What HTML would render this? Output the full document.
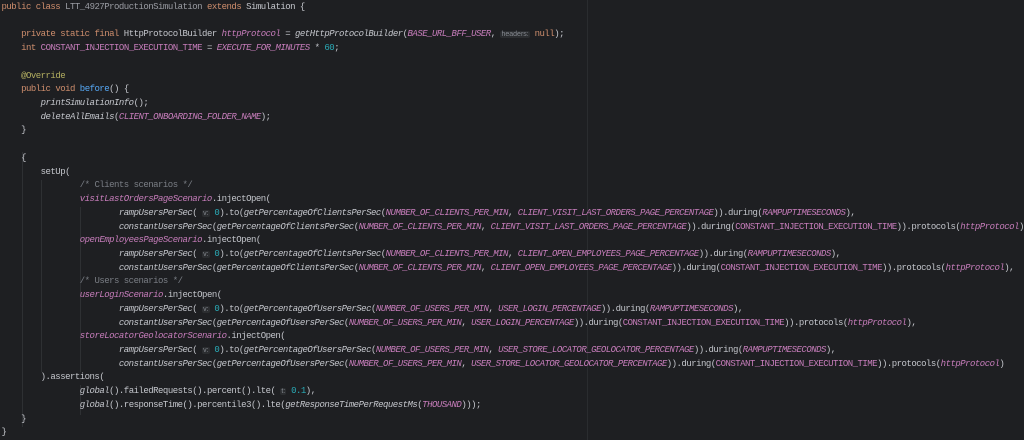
<!DOCTYPE html>
<html><head><meta charset="utf-8"><style>
html,body{margin:0;padding:0;background:#1e1f22;width:1024px;height:440px;overflow:hidden}
pre{margin:0;padding:1px 0 0 1.5px;font-family:"Liberation Mono",monospace;font-size:9px;letter-spacing:-0.51px;line-height:13.72px;color:#c4c6cc;white-space:pre;position:relative}
.k{color:#cf8e6d}.p{color:#c77dbb;font-style:italic}.pn{color:#c77dbb}.i{font-style:italic}
.n{color:#2aacb8}.c{color:#7a7e85}.a{color:#b3ae60}.m{color:#56a8f5}.g{color:#9a9ca3}
.h{background:#2b2d30;color:#868a91;border-radius:2px;font-family:"Liberation Sans",sans-serif;font-size:7px;letter-spacing:0;padding:0 1px}
.gl{position:absolute;width:1px;background:#2e3033}
</style></head><body>
<div class="gl" style="left:22px;top:152px;height:275px"></div>
<div class="gl" style="left:41px;top:180px;height:192px"></div>
<div class="gl" style="left:80px;top:207px;height:165px"></div>
<div class="gl" style="left:80px;top:385px;height:30px"></div>
<div class="gl" style="left:587px;top:0;height:440px;background:#2a2c2f"></div>
<pre><span class="k">public class</span> <span class="g">LTT_4927ProductionSimulation</span> <span class="k">extends</span> Simulation {

    <span class="k">private static final</span> HttpProtocolBuilder <span class="p">httpProtocol</span> = <span class="i">getHttpProtocolBuilder</span>(<span class="p">BASE_URL_BFF_USER</span>, <span class="h">headers:</span> <span class="k">null</span>);
    <span class="k">int</span> <span class="pn">CONSTANT_INJECTION_EXECUTION_TIME</span> = <span class="p">EXECUTE_FOR_MINUTES</span> * <span class="n">60</span>;

    <span class="a">@Override</span>
    <span class="k">public void</span> <span class="m">before</span>() {
        <span class="i">printSimulationInfo</span>();
        <span class="i">deleteAllEmails</span>(<span class="p">CLIENT_ONBOARDING_FOLDER_NAME</span>);
    }

    {
        setUp(
                <span class="c">/* Clients scenarios */</span>
                <span class="p">visitLastOrdersPageScenario</span>.injectOpen(
                        <span class="i">rampUsersPerSec</span>( <span class="h">v:</span> <span class="n">0</span>).to(<span class="i">getPercentageOfClientsPerSec</span>(<span class="p">NUMBER_OF_CLIENTS_PER_MIN</span>, <span class="p">CLIENT_VISIT_LAST_ORDERS_PAGE_PERCENTAGE</span>)).during(<span class="p">RAMPUPTIMESECONDS</span>),
                        <span class="i">constantUsersPerSec</span>(<span class="i">getPercentageOfClientsPerSec</span>(<span class="p">NUMBER_OF_CLIENTS_PER_MIN</span>, <span class="p">CLIENT_VISIT_LAST_ORDERS_PAGE_PERCENTAGE</span>)).during(<span class="pn">CONSTANT_INJECTION_EXECUTION_TIME</span>)).protocols(<span class="p">httpProtocol</span>),
                <span class="p">openEmployeesPageScenario</span>.injectOpen(
                        <span class="i">rampUsersPerSec</span>( <span class="h">v:</span> <span class="n">0</span>).to(<span class="i">getPercentageOfClientsPerSec</span>(<span class="p">NUMBER_OF_CLIENTS_PER_MIN</span>, <span class="p">CLIENT_OPEN_EMPLOYEES_PAGE_PERCENTAGE</span>)).during(<span class="p">RAMPUPTIMESECONDS</span>),
                        <span class="i">constantUsersPerSec</span>(<span class="i">getPercentageOfClientsPerSec</span>(<span class="p">NUMBER_OF_CLIENTS_PER_MIN</span>, <span class="p">CLIENT_OPEN_EMPLOYEES_PAGE_PERCENTAGE</span>)).during(<span class="pn">CONSTANT_INJECTION_EXECUTION_TIME</span>)).protocols(<span class="p">httpProtocol</span>),
                <span class="c">/* Users scenarios */</span>
                <span class="p">userLoginScenario</span>.injectOpen(
                        <span class="i">rampUsersPerSec</span>( <span class="h">v:</span> <span class="n">0</span>).to(<span class="i">getPercentageOfUsersPerSec</span>(<span class="p">NUMBER_OF_USERS_PER_MIN</span>, <span class="p">USER_LOGIN_PERCENTAGE</span>)).during(<span class="p">RAMPUPTIMESECONDS</span>),
                        <span class="i">constantUsersPerSec</span>(<span class="i">getPercentageOfUsersPerSec</span>(<span class="p">NUMBER_OF_USERS_PER_MIN</span>, <span class="p">USER_LOGIN_PERCENTAGE</span>)).during(<span class="pn">CONSTANT_INJECTION_EXECUTION_TIME</span>)).protocols(<span class="p">httpProtocol</span>),
                <span class="p">storeLocatorGeolocatorScenario</span>.injectOpen(
                        <span class="i">rampUsersPerSec</span>( <span class="h">v:</span> <span class="n">0</span>).to(<span class="i">getPercentageOfUsersPerSec</span>(<span class="p">NUMBER_OF_USERS_PER_MIN</span>, <span class="p">USER_STORE_LOCATOR_GEOLOCATOR_PERCENTAGE</span>)).during(<span class="p">RAMPUPTIMESECONDS</span>),
                        <span class="i">constantUsersPerSec</span>(<span class="i">getPercentageOfUsersPerSec</span>(<span class="p">NUMBER_OF_USERS_PER_MIN</span>, <span class="p">USER_STORE_LOCATOR_GEOLOCATOR_PERCENTAGE</span>)).during(<span class="pn">CONSTANT_INJECTION_EXECUTION_TIME</span>)).protocols(<span class="p">httpProtocol</span>)
        ).assertions(
                <span class="i">global</span>().failedRequests().percent().lte( <span class="h">t:</span> <span class="n">0.1</span>),
                <span class="i">global</span>().responseTime().percentile3().lte(<span class="i">getResponseTimePerRequestMs</span>(<span class="p">THOUSAND</span>)));
    }
}</pre>
</body></html>
